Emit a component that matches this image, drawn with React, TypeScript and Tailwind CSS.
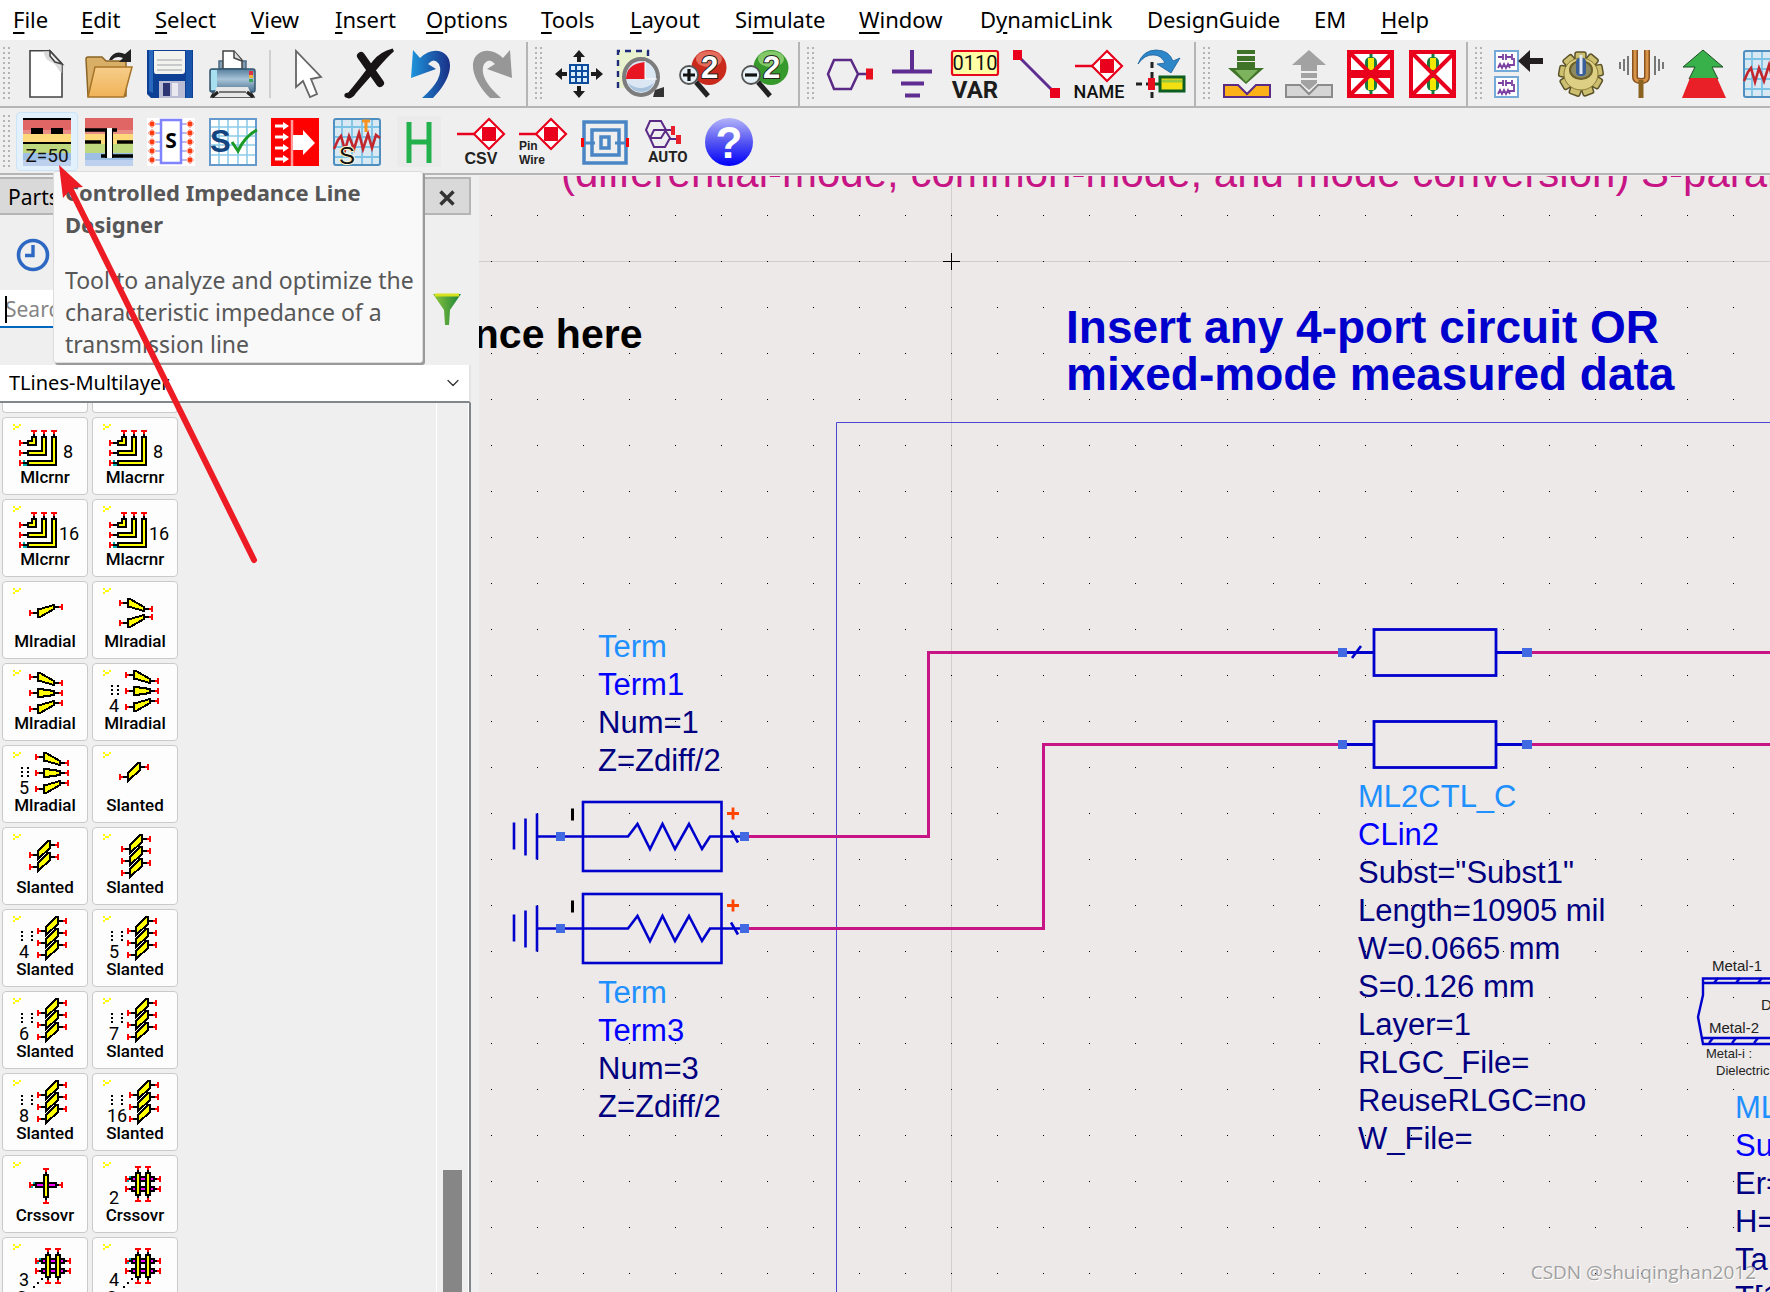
import React from 'react';
import { ChevronDown } from 'lucide-react';

// --- Menu bar ---
interface MenuEntry {
  label: string;
  hot: number;
  width: string;
}

const MENUS: MenuEntry[] = [
  { label: 'File', hot: 0, width: 'w-[68px]' },
  { label: 'Edit', hot: 0, width: 'w-[74px]' },
  { label: 'Select', hot: 0, width: 'w-24' },
  { label: 'View', hot: 0, width: 'w-[84px]' },
  { label: 'Insert', hot: 0, width: 'w-[91px]' },
  { label: 'Options', hot: 0, width: 'w-[115px]' },
  { label: 'Tools', hot: 0, width: 'w-[89px]' },
  { label: 'Layout', hot: 0, width: 'w-[105px]' },
  { label: 'Simulate', hot: 2, width: 'w-[124px]' },
  { label: 'Window', hot: 0, width: 'w-[121px]' },
  { label: 'DynamicLink', hot: 1, width: 'w-[167px]' },
  { label: 'DesignGuide', hot: -1, width: 'w-[167px]' },
  { label: 'EM', hot: -1, width: 'w-[67px]' },
  { label: 'Help', hot: 0, width: 'w-16' },
];

const MenuBar: React.FC = () => (
  <nav className="flex h-10 shrink-0 items-center bg-white pb-[3px] pl-[13px] text-[22px] leading-8 text-black">
    {MENUS.map((m) => (
      <button key={m.label} className={`shrink-0 whitespace-nowrap text-left ${m.width}`}>
        {m.hot < 0 ? (
          m.label
        ) : (
          <>
            {m.label.slice(0, m.hot)}
            <span className="underline decoration-2 underline-offset-4">{m.label[m.hot]}</span>
            {m.label.slice(m.hot + 1)}
          </>
        )}
      </button>
    ))}
  </nav>
);

// --- Toolbar icons, all on a 48 x 48 grid ---
const Icon: React.FC<{ children: React.ReactNode }> = ({ children }) => (
  <svg viewBox="0 0 48 48" className="h-12 w-12 overflow-visible" fontFamily="Liberation Sans, sans-serif">
    {children}
  </svg>
);

const NewIcon = () => (
  <Icon>
    <path d="M7 .8h20l12 13V47H7z" fill="#fff" stroke="#444" strokeWidth="1.6" />
    <path d="M20 1h7l12 13v9C34 20 34 14 28 12S22 5 20 1z" fill="#ccc" opacity=".7" />
    <path d="M27 1v5l5 6 7 2z" fill="#eee" stroke="#444" strokeWidth="1.6" />
  </Icon>
);

const OpenIcon = () => (
  <Icon>
    <path d="M1 9q0-2 2-2h14l4 4h20v35H3z" fill="#d9ae66" stroke="#8a6425" strokeWidth="1.5" />
    <path d="M10 17h37l-8 30H3z" fill="url(#folder)" stroke="#a87528" strokeWidth="1.5" />
    <path d="M24 10q5-11 16-6l6-5v13H34l4-4q-7-3-11 2z" fill="#222" />
    <defs>
      <linearGradient id="folder" x2="0" y2="1">
        <stop stopColor="#f6cd8a" />
        <stop offset="1" stopColor="#f0b358" />
      </linearGradient>
    </defs>
  </Icon>
);

const SaveIcon = () => (
  <Icon>
    <path d="M0 0h46v48H4l-4-4z" fill="#0d3f94" />
    <path d="M2 0h4v43l-4-2z" fill="#2768bd" />
    <path d="M39 0h6v48h-6z" fill="#1a55ac" />
    <path d="M7 1h31v20q0 3-3 3H9q-2 0-2-3z" fill="#f2f2ee" />
    <path d="M10 10h25M10 15h25M10 20h25" stroke="#b9bcc0" strokeWidth="1.5" />
    <path d="M12 31h26v17H12z" fill="#b9bcd3" />
    <path d="M16 33h7v13h-7z" fill="#2d3472" />
    <path d="M25 33h6v13h-6z" fill="#e9e9ef" />
  </Icon>
);

const PrinterIcon = () => (
  <Icon>
    <path d="M10 19V11h27v8z" fill="#7f9db3" stroke="#4e6c85" strokeWidth="1.5" />
    <path d="M14 19V1h11l8 9v9z" fill="#fff" stroke="#444" strokeWidth="1.5" />
    <path d="M25 1v7l8 3" fill="#ddd" stroke="#444" strokeWidth="1.5" />
    <path d="M8 36h30l7 11H2z" fill="#dcdcdc" stroke="#333" strokeWidth="1.5" />
    <rect x="1" y="19" width="45" height="23" rx="2" fill="url(#printer)" stroke="#33576f" strokeWidth="1.5" />
    <path d="M2 20h6v20H2z" fill="#a8dff0" />
    <path d="M8 37h31l4 10H4z" fill="#e7e7e7" />
    <path d="M10 42h27" stroke="#777" strokeWidth="2" />
    <path d="M3 47l6-5M44 47l-6-5" stroke="#222" strokeWidth="3" />
    <path d="M40 21h4v4h-4z" fill="#dd3344" />
    <path d="M40 25h4v3h-4z" fill="#efb43a" />
    <path d="M40 29h4v3h-4z" fill="#3aa655" />
    <defs>
      <linearGradient id="printer" x2="0" y2="1">
        <stop stopColor="#557e9e" />
        <stop offset=".45" stopColor="#a9c4d8" />
        <stop offset="1" stopColor="#47708f" />
      </linearGradient>
    </defs>
  </Icon>
);

const PointerIcon = () => (
  <Icon>
    <path d="M13 1v36l7-6 7 16 7-3-6-15 10-2z" fill="#fff" stroke="#666" strokeWidth="1.8" />
  </Icon>
);

const DeleteIcon = () => (
  <Icon>
    <path d="M16 6l19 27" stroke="#181416" strokeWidth="8" strokeLinecap="round" />
    <path d="M4 44Q16 30 29 12 36 3 48 0 40 7 31 18L10 42Q6 49 1 46 0 44 4 44z" fill="#181416" stroke="#181416" strokeWidth="3" />
  </Icon>
);

const UndoIcon = () => (
  <Icon>
    <path d="M4 28L6 0l7 8Q24-2 35 2c14 7 9 28-9 46H15Q38 28 32 14q-5-7-11 0l8 5z" fill="url(#undo)" />
    <defs>
      <linearGradient id="undo">
        <stop stopColor="#1e95dc" />
        <stop offset="1" stopColor="#1a2f86" />
      </linearGradient>
    </defs>
  </Icon>
);

const RedoIcon = () => (
  <Icon>
    <path d="M43 28L41 0l-7 8Q23-2 12 2c-14 7-9 28 9 46h11Q9 28 15 14q5-7 11 0l-8 5z" fill="#979797" />
  </Icon>
);

const ViewAllIcon = () => (
  <Icon>
    <rect x="14" y="14" width="20" height="20" fill="#0c4a9c" />
    <path
      d="M16 16h4v4h-4zM22 16h4v4h-4zM28 16h4v4h-4zM16 22h4v4h-4zM22 22h4v4h-4zM28 22h4v4h-4zM16 28h4v4h-4zM22 28h4v4h-4zM28 28h4v4h-4z"
      fill="#d8ecff"
    />
    <path
      d="M24 0l6 7h-4v5h-4V7h-4zM24 48l6-7h-4v-5h-4v5h-4zM0 24l7-6v4h5v4H7v4zM48 24l-7-6v4h-5v4h5v4z"
      fill="#1c1c1c"
    />
  </Icon>
);

const ZoomAreaIcon = () => (
  <Icon>
    <path d="M0 0h31v38H0z" fill="#e9f2cf" />
    <path d="M1 38V1h30v12" fill="none" stroke="#1d2b7a" strokeWidth="2.400" strokeDasharray="6 5" />
    <path d="M38 40l9-3v10H36z" fill="#333" />
    <ellipse cx="24" cy="27" rx="17" ry="18" fill="#dbe7f3" stroke="#7c7c7c" strokeWidth="4" />
    <path d="M28 12v17H9q0-15 19-17z" fill="#e81622" />
    <path d="M28 11v18h12" fill="none" stroke="#fff" strokeWidth="1" />
    <path d="M11 33q12 10 26 0-4 9-13 9t-13-9z" fill="#a9c3dd" />
  </Icon>
);

const ZoomTwo: React.FC<{ color: string; light: string; minus?: boolean }> = ({ color, light, minus }) => (
  <Icon>
    <circle cx="30" cy="17.5" r="17.5" fill={color} />
    <ellipse cx="30" cy="9" rx="13" ry="8" fill={light} opacity=".7" />
    <text x="22" y="28" fontSize="31" fontWeight="bold" fill="#fff" stroke="#222" strokeWidth="2" paintOrder="stroke">
      2
    </text>
    <path d="M17 32l12 14" stroke="#222" strokeWidth="5" />
    <circle cx="10" cy="25" r="9" fill="#e6f1f8" stroke="#555" strokeWidth="1.8" />
    <path d={minus ? 'M4 25h12' : 'M4 25h12M10 19v12'} stroke="#111" strokeWidth="3.200" />
  </Icon>
);

const PortIcon = () => (
  <Icon>
    <path d="M7 10h17l7 14-7 15H7L1 24zM31 24h8" fill="none" stroke="#5a2a86" strokeWidth="2.500" />
    <rect x="39" y="18.5" width="7" height="11" fill="#e8101f" />
  </Icon>
);

const GroundIcon = () => (
  <Icon>
    <path d="M23 0v22M3 21.500h40M12 33.500h23M16 45.500h15" stroke="#5f2c91" strokeWidth="4" />
  </Icon>
);

const VarIcon = () => (
  <Icon>
    <rect x="1" y="1" width="46" height="24" rx="2" fill="#ffffa6" stroke="#e60a1a" strokeWidth="2.200" />
    <text x="24" y="20" textAnchor="middle" fontSize="20" fontFamily="Roboto, sans-serif" fill="#111">0110</text>
    <text x="24" y="48" textAnchor="middle" fontSize="24" fontWeight="bold" fontFamily="Roboto, sans-serif" fill="#1c1c1c">VAR</text>
  </Icon>
);

const WireIcon = () => (
  <Icon>
    <path d="M4 5l38 38" stroke="#5f2c91" strokeWidth="3" />
    <path d="M0 0h9v10H0zM37 38h10v10H37z" fill="#e8001c" />
  </Icon>
);

const Diamond: React.FC<{ cx: number; y: number }> = ({ cx, y }) => (
  <g>
    <path d={`M0 ${y}h${cx - 15}`} stroke="#e8001c" strokeWidth="2.500" />
    <path
      d={`M${cx} ${y - 15}l15 15-15 15-15-15z`}
      fill="#fff"
      stroke="#e8001c"
      strokeWidth="2.200"
    />
    <rect x={cx - 7} y={y - 7} width="14" height="14" rx="1" fill="#e8001c" />
  </g>
);

const NameIcon = () => (
  <Icon>
    <Diamond cx={32} y={16} />
    <text x="24" y="48" textAnchor="middle" fontSize="18" fontWeight="500" fontFamily="Roboto, sans-serif" fill="#111">NAME</text>
  </Icon>
);

const SwapIcon = () => (
  <Icon>
    <path d="M15 12v36M-1 34h12" stroke="#222" strokeWidth="3" strokeDasharray="6 4" />
    <path d="M17 34h6" stroke="#0b5d22" strokeWidth="3" />
    <rect x="11" y="28" width="7" height="12" fill="#e8101f" />
    <rect x="23" y="27" width="24" height="14" fill="#f3e012" stroke="#0b5d22" strokeWidth="3" />
    <path d="M25 31h20" stroke="#9bc93d" strokeWidth="3" />
    <path d="M1 14Q6 0 19 0q13 0 17 11l7-3-9 15-14-9 8-1Q24 5 17 5 8 4 1 14z" fill="#2c86c8" stroke="#1b5f99" strokeWidth=".8" />
  </Icon>
);

const PushIcon = () => (
  <Icon>
    <path d="M1 35h14l9 9 9-9h14v12H1z" fill="#fbb117" stroke="#5c2b85" strokeWidth="2" />
    <path d="M14 0h18v4H14zM14 6h18v5H14zM14 12h18v6h9L23 34 5 18h9z" fill="#3f7327" />
    <path d="M12 20h23L23 32z" fill="#7eb35e" />
  </Icon>
);

const PopIcon = () => (
  <Icon>
    <path d="M1 35h14l9 9 9-9h14v12H1z" fill="#d5d5d5" stroke="#8b8b8b" strokeWidth="2" />
    <path d="M24 0l17 15h-9v6H16v-6H7zM16 23h16v5H16zM16 30h16v3l-8 7-8-7z" fill="#a2a2a2" />
  </Icon>
);

const DeactivateIcon: React.FC<{ short?: boolean }> = ({ short }) => (
  <Icon>
    <rect x="2" y="2" width="43" height="44" fill="#fff" stroke="#e8001c" strokeWidth="4" />
    <path d="M24 4v40" stroke="#157a3c" strokeWidth="3" />
    <rect x="18" y="7" width="12" height="13" rx="5" fill="#157a3c" />
    <rect x="18" y="28" width="12" height="13" rx="5" fill="#157a3c" />
    <path d="M21 8h6v12h-6zM21 28h6v12h-6z" fill="#f2e800" />
    <path d="M4 4l40 40M44 4L4 44" stroke="#e8001c" strokeWidth="4" />
    {short && <path d="M2 24h43" stroke="#e8001c" strokeWidth="8" />}
  </Icon>
);

const SchematicsIcon = () => (
  <Icon>
    <path d="M0 1h23v20H0zM0 27h23v20H0z" fill="#fff" stroke="#74a9d8" strokeWidth="2" />
    {[0, 26].map((dy) => (
      <g key={dy} fill="none" stroke="#7a3fa0" strokeWidth="1.800" transform={`translate(0 ${dy})`}>
        <path d="M3 7h5M8 4v6M11 4v6M11 7h5M17 4v6M19 8v7h-5M3 18l2-4 2 4 2-4 2 4 2-4 2 4" />
      </g>
    ))}
    <path d="M48 8v6H35v8L23 11 35 0v8z" fill="#231f20" />
  </Icon>
);

const GearIcon = () => (
  <Icon>
    {[0, 40, 80, 120, 160, 200, 240, 280, 320].map((a) => (
      <rect key={a} x="18" y="2" width="11" height="12" rx="2" fill="#cdbf70" stroke="#5c5228" strokeWidth="1.500" transform={`rotate(${a} 24 24)`} />
    ))}
    <ellipse cx="24" cy="24" rx="17" ry="16" fill="#ddd085" stroke="#8a7a35" strokeWidth="1" />
    <ellipse cx="24" cy="20" rx="11" ry="9" fill="#8d8a60" stroke="#6c5f28" strokeWidth="2" />
    <rect x="19" y="8" width="10" height="18" rx="4" fill="#3a5e9a" />
    <path d="M24 5v19" stroke="#dfe8f2" strokeWidth="3" />
  </Icon>
);

const TuneIcon = () => (
  <Icon>
    <path d="M16 0v27q0 4 6 4t6-4V0" fill="none" stroke="#8a5220" strokeWidth="6" />
    <path d="M16 0v27q0 4 6 4t6-4V0" fill="none" stroke="#d79348" strokeWidth="3" />
    <path d="M22 30v18" stroke="#8a6320" strokeWidth="5" />
    <path d="M9 6v19M5 9v12M1 12v7M36 6v19M40 9v12M44 12v7" stroke="#777" strokeWidth="2" />
  </Icon>
);

const OptimIcon = () => (
  <Icon>
    <path d="M22 0L42 17H31l6 12H8l6-12H2z" fill="#39b14a" stroke="#1c4f25" strokeWidth="1" />
    <path d="M9 28h27l9 20H1z" fill="#e92027" />
  </Icon>
);

const Plot: React.FC = () => (
  <g>
    <rect x="1" y="1" width="46" height="46" rx="2" fill="#d9e9f4" stroke="#4f8fc0" strokeWidth="2" />
    <path d="M9 2v44M19 2v44M29 2v44M39 2v44M2 9h44M2 19h44M2 29h44M2 39h44" stroke="#7cc3e6" strokeWidth="1.800" />
    <path d="M1 31l4-9 3-4 4 14 4-14 5 13 5-16 4 16 5-15 4 14 4-13 4 3" fill="none" stroke="#c1272d" strokeWidth="2.600" />
  </g>
);

const PlotIcon = () => (
  <Icon>
    <Plot />
  </Icon>
);

const SPlotIcon = () => (
  <Icon>
    <Plot />
    <path d="M29 3h8M33 3v11" stroke="#f7941d" strokeWidth="3" />
    <text x="6" y="46" fontSize="24" fill="#111" stroke="#fff3c4" strokeWidth="2" paintOrder="stroke">S</text>
  </Icon>
);

const Layers = () => (
  <g>
    <path d="M0 0h48v16H0z" fill="#e06666" />
    <path d="M0 12h48v6H0z" fill="#e98f86" />
    <path d="M0 16h48v10H0z" fill="#ffd97a" />
    <path d="M0 26h48v9H0z" fill="#bfd77d" />
    <path d="M0 35h48v13H0z" fill="#9dbfe6" />
    <path d="M0 42h48v6H0z" fill="#bdd1ee" />
  </g>
);

const ImpedanceIcon = () => (
  <Icon>
    <Layers />
    <path d="M0 1h48M0 25h48" stroke="#000" strokeWidth="2" />
    <path d="M8 10h12v6H8zM28 10h12v6H28z" />
    <text x="24" y="44" textAnchor="middle" fontSize="19" fontFamily="Roboto, sans-serif" fill="#111">Z=50</text>
  </Icon>
);

const ViaIcon = () => (
  <Icon>
    <Layers />
    <path d="M0 12h32M0 24h16M32 24h16M16 38h32" stroke="#000" strokeWidth="3.500" />
    <path d="M20 11h8v29h-8z" fill="#000" />
    <path d="M22 10h5v30h-5z" fill="#fff" />
  </Icon>
);

const SBlockIcon = () => (
  <Icon>
    <path d="M0 0h48v48H0z" fill="#fff" />
    {[6, 15, 24, 33, 42].map((y) => (
      <g key={y}>
        <path d={`M5 ${y}h38`} stroke="#6f73e0" strokeWidth="1.200" />
        <path d={`M5 ${y - 4}l4 4-4 4-4-4zM43 ${y - 4}l4 4-4 4-4-4z`} fill="#ffd8d0" stroke="#ffb0a4" />
        <circle cx="5" cy={y} r="2.4" fill="#ff3b10" />
        <circle cx="43" cy={y} r="2.4" fill="#ff3b10" />
      </g>
    ))}
    <rect x="14" y="2" width="20" height="43" fill="#fff" stroke="#7f83ff" strokeWidth="2.500" />
    <text x="24" y="30" textAnchor="middle" fontSize="21" fontWeight="bold" fontFamily="Noto Sans, sans-serif" fill="#000">S</text>
  </Icon>
);

const SCheckIcon = () => (
  <Icon>
    <rect x="1" y="1" width="46" height="46" fill="#fff" stroke="#6699cc" strokeWidth="2" />
    <path d="M10 2v44M19 2v44M29 2v44M38 2v44M2 9h44M2 18h44M2 27h44M2 37h44" stroke="#8ccbe8" strokeWidth="1.600" />
    <text x="1" y="34" fontSize="31" fontWeight="bold" fill="#12447f">S</text>
    <path d="M23 24l6 9Q36 18 48 12" fill="none" stroke="#1a9a26" strokeWidth="3" />
  </Icon>
);

const DriveIcon = () => (
  <Icon>
    <path d="M0 0h48v48H0z" fill="#f00" />
    <path d="M21 2v46" stroke="#ff9c9c" strokeWidth="2.500" />
    <path d="M22 17h10v-5l12 13-12 12v-5H22z" fill="#fff" />
    {[8, 19, 30, 41].map((y) => (
      <path key={y} d={`M4 ${y}h10`} stroke="#fff" strokeWidth="3" />
    ))}
    {[8, 19, 30, 41].map((y) => (
      <path key={`t${y}`} d={`M12 ${y - 4}l6 4-6 4z`} fill="#fff" />
    ))}
  </Icon>
);

const HIcon = () => (
  <Icon>
    <path d="M2-2h44v51H2z" fill="#ebebeb" />
    <path d="M14 4v41M34 4v41M14 24h20" stroke="#22b14c" strokeWidth="5" />
  </Icon>
);

const CsvIcon = () => (
  <Icon>
    <Diamond cx={32} y={16} />
    <text x="24" y="46" textAnchor="middle" fontSize="16" fontWeight="bold" fill="#222">CSV</text>
  </Icon>
);

const PinWireIcon = () => (
  <Icon>
    <Diamond cx={32} y={16} />
    <text x="0" y="32" fontSize="12" fontWeight="bold" fill="#222">Pin</text>
    <text x="0" y="46" fontSize="12" fontWeight="bold" fill="#222">Wire</text>
  </Icon>
);

const SpiralIcon = () => (
  <Icon>
    <path d="M3 4h42v41H3zM11 12h27v25H11zM20 19h8v11h-8z" fill="none" stroke="#4a86c5" strokeWidth="3.500" />
    <path d="M4 25h10M34 25h10" stroke="#4a86c5" strokeWidth="3" />
    <path d="M0 20h3v9H0zM45 20h3v9h-3z" fill="#f00" />
  </Icon>
);

const AutoIcon = () => (
  <Icon>
    <path d="M7 3h11l5 9-5 8H7L3 12zM11 12h11l5 8-5 9H11l-4-9zM23 12h5M27 21h6" fill="none" stroke="#5a2a86" strokeWidth="2" />
    <path d="M28 8h4v9h-4zM33 17h5v9h-5z" fill="#e8202c" />
    <text x="25" y="44" textAnchor="middle" fontSize="15" fontWeight="bold" fontFamily="Roboto, sans-serif" fill="#222">AUTO</text>
  </Icon>
);

const HelpIcon = () => (
  <Icon>
    <circle cx="24" cy="24" r="24" fill="url(#help)" />
    <text x="24" y="40" textAnchor="middle" fontSize="44" fontWeight="bold" fill="#fff">?</text>
    <defs>
      <linearGradient id="help" x2="0" y2="1">
        <stop stopColor="#b4b4fa" />
        <stop offset=".5" stopColor="#5555f2" />
        <stop offset="1" stopColor="#0000fa" />
      </linearGradient>
    </defs>
  </Icon>
);

// --- Toolbars ---
const Grip: React.FC<{ className?: string }> = ({ className = '' }) => (
  <span
    className={`h-[54px] w-[7px] shrink-0 bg-[radial-gradient(circle_at_1px_1px,#b4b4b4_1px,transparent_1px)] bg-[length:5px_5px] ${className}`}
  />
);

interface ToolProps {
  name: string;
  active?: boolean;
  children: React.ReactNode;
}

const Tool: React.FC<ToolProps> = ({ name, active, children }) => (
  <button
    aria-label={name}
    className={`flex h-[59px] w-[62px] shrink-0 items-center justify-center rounded-sm border ${
      active ? 'border-[#cce4f7] bg-[#e3f1fc]' : 'border-transparent'
    }`}
  >
    {children}
  </button>
);

const ToolGroup: React.FC<{ first?: boolean; children: React.ReactNode }> = ({ first, children }) => (
  <div
    className={`flex shrink-0 items-center border-r-2 border-[#b5b5b5] pr-[2px] ${first ? 'pl-[3px]' : 'pl-[7px]'}`}
  >
    <Grip className="mr-1.5" />
    {children}
  </div>
);

const MainToolbar: React.FC = () => (
  <div className="flex h-[68px] shrink-0 overflow-hidden border-b-2 border-[#b5b5b5] bg-[#efefef] pt-0.5">
    <ToolGroup first>
      <Tool name="New"><NewIcon /></Tool>
      <Tool name="Open"><OpenIcon /></Tool>
      <Tool name="Save"><SaveIcon /></Tool>
      <Tool name="Print"><PrinterIcon /></Tool>
      <span className="mx-[5px] h-12 w-0.5 shrink-0 bg-[#d0d0d0]" />
      <Tool name="Select"><PointerIcon /></Tool>
      <Tool name="Delete"><DeleteIcon /></Tool>
      <Tool name="Undo"><UndoIcon /></Tool>
      <Tool name="Redo"><RedoIcon /></Tool>
    </ToolGroup>
    <ToolGroup>
      <Tool name="View all"><ViewAllIcon /></Tool>
      <Tool name="Zoom area"><ZoomAreaIcon /></Tool>
      <Tool name="Zoom in"><ZoomTwo color="#c92a1c" light="#f08a78" /></Tool>
      <Tool name="Zoom out"><ZoomTwo color="#359a2b" light="#a5dc84" minus /></Tool>
    </ToolGroup>
    <ToolGroup>
      <Tool name="Port"><PortIcon /></Tool>
      <Tool name="Ground"><GroundIcon /></Tool>
      <Tool name="Variable"><VarIcon /></Tool>
      <Tool name="Wire"><WireIcon /></Tool>
      <Tool name="Wire name"><NameIcon /></Tool>
      <Tool name="Swap"><SwapIcon /></Tool>
    </ToolGroup>
    <ToolGroup>
      <Tool name="Push into"><PushIcon /></Tool>
      <Tool name="Pop out"><PopIcon /></Tool>
      <Tool name="Deactivate and short"><DeactivateIcon short /></Tool>
      <Tool name="Deactivate"><DeactivateIcon /></Tool>
    </ToolGroup>
    <ToolGroup>
      <Tool name="Controller"><SchematicsIcon /></Tool>
      <Tool name="Run"><GearIcon /></Tool>
      <Tool name="Tune"><TuneIcon /></Tool>
      <Tool name="Optimize"><OptimIcon /></Tool>
      <Tool name="Plot"><PlotIcon /></Tool>
    </ToolGroup>
  </div>
);

const SecondToolbar: React.FC = () => (
  <div className="flex h-[67px] shrink-0 items-center overflow-hidden border-b-2 border-[#b5b5b5] bg-[#efefef] pl-[3px] pt-0.5">
    <Grip className="mr-1.5" />
    <Tool name="Controlled Impedance Line Designer" active><ImpedanceIcon /></Tool>
    <Tool name="Via Designer"><ViaIcon /></Tool>
    <Tool name="S block"><SBlockIcon /></Tool>
    <Tool name="S check"><SCheckIcon /></Tool>
    <Tool name="Drive"><DriveIcon /></Tool>
    <Tool name="S plot"><SPlotIcon /></Tool>
    <Tool name="H"><HIcon /></Tool>
    <Tool name="CSV"><CsvIcon /></Tool>
    <Tool name="Pin wire"><PinWireIcon /></Tool>
    <Tool name="Spiral"><SpiralIcon /></Tool>
    <Tool name="Auto"><AutoIcon /></Tool>
    <Tool name="Help"><HelpIcon /></Tool>
  </div>
);

// --- Part glyphs: low resolution bitmaps, one unit is two pixels ---
const Port: React.FC<{ x: number; y: number; turn?: number }> = ({ x, y, turn = 0 }) => (
  <g transform={`rotate(${turn} ${x + 0.5} ${y + 0.5})`}>
    <path d={`M${x} ${y - 1}h1v3h-1zM${x + 1} ${y}h1v1h-1z`} fill="#f00" />
    <path d={`M${x + 2} ${y}h2v1h-2z`} fill="#000" />
  </g>
);

const Corner: React.FC = () => (
  <g>
    {[0, 1, 2].map((i) => {
      const d = `M13.5 ${12.5 + 5 * i}H${15.5 + 5 * i}V10.5`;
      return (
        <g key={i} fill="none">
          <Port x={8} y={12 + 5 * i} />
          <Port x={15 + 5 * i} y={6} turn={90} />
          <path d={d} stroke="#000" strokeWidth="3" strokeLinecap="square" />
          <path d={d} stroke="#ff0" strokeWidth="1" strokeLinecap="square" />
        </g>
      );
    })}
    <path d="M10 21h1v1h-1zM10 23h2v1h-2z" fill="#0aa" />
  </g>
);

const Radial: React.FC<{ x: number; y: number; dy: number }> = ({ x, y, dy }) => (
  <g>
    <Port x={x} y={y} />
    <Port x={x + 16} y={y + dy} turn={180} />
    <path
      d={`M${x + 4.5} ${y - 1.5}H${x + 5.5}L${x + 12.5} ${y + dy - 0.5}V${y + dy + 1.5}L${x + 5.5} ${y + 2.5}H${x + 4.5}z`}
      fill="#ff0"
      stroke="#000"
    />
  </g>
);

const Slant: React.FC<{ x: number; y: number }> = ({ x, y }) => (
  <g>
    <Port x={x} y={y} />
    <Port x={x + 14} y={y - 5} turn={180} />
    <path d={`M${x + 4.5} ${y - 1.5}L${x + 9.5} ${y - 6.5}H${x + 10.5}V${y - 3}L${x + 4.5} ${y + 2.5}z`} fill="#ff0" stroke="#000" />
  </g>
);

const CrossOne: React.FC = () => (
  <g>
    <Port x={13} y={14} />
    <Port x={29} y={14} turn={180} />
    <Port x={21} y={6} turn={90} />
    <Port x={21} y={23} turn={270} />
    <path d="M16.500 13.500h10v2h-10z" fill="#f0f" stroke="#000" />
    <path d="M20.500 9.500h2v11h-2z" fill="#ff0" stroke="#000" />
    <path d="M15 13h1v1h-1zM14 15h1v1h-1z" fill="#0aa" />
  </g>
);

const CrossTwo: React.FC = () => (
  <g>
    {[11, 16].map((y) => (
      <g key={y}>
        <Port x={16} y={y} />
        <Port x={33} y={y} turn={180} />
        <path d={`M19.500 ${y - 0.5}h11v2h-11z`} fill="#f0f" stroke="#000" />
      </g>
    ))}
    {[22, 27].map((x) => (
      <g key={x}>
        <Port x={x} y={5} turn={90} />
        <Port x={x} y={22} turn={270} />
        <path d={`M${x - 0.5} 8.500h2v11h-2z`} fill="#ff0" stroke="#000" />
      </g>
    ))}
    <path d="M18 10h1v1h-1zM17 12h1v1h-1z" fill="#0aa" />
  </g>
);

type Shape = 'corner' | 'radial' | 'slant' | 'cross' | 'cross2';

interface Part {
  label: string;
  shape: Shape;
  count?: number;
  num?: string;
}

const PARTS: Part[] = [
  { label: 'Mlcrnr', shape: 'corner', num: '8' },
  { label: 'Mlacrnr', shape: 'corner', num: '8' },
  { label: 'Mlcrnr', shape: 'corner', num: '16' },
  { label: 'Mlacrnr', shape: 'corner', num: '16' },
  { label: 'Mlradial', shape: 'radial', count: 1 },
  { label: 'Mlradial', shape: 'radial', count: 2 },
  { label: 'Mlradial', shape: 'radial', count: 3 },
  { label: 'Mlradial', shape: 'radial', count: 3, num: '4' },
  { label: 'Mlradial', shape: 'radial', count: 3, num: '5' },
  { label: 'Slanted', shape: 'slant', count: 1 },
  { label: 'Slanted', shape: 'slant', count: 2 },
  { label: 'Slanted', shape: 'slant', count: 3 },
  { label: 'Slanted', shape: 'slant', count: 3, num: '4' },
  { label: 'Slanted', shape: 'slant', count: 3, num: '5' },
  { label: 'Slanted', shape: 'slant', count: 3, num: '6' },
  { label: 'Slanted', shape: 'slant', count: 3, num: '7' },
  { label: 'Slanted', shape: 'slant', count: 3, num: '8' },
  { label: 'Slanted', shape: 'slant', count: 3, num: '16' },
  { label: 'Crssovr', shape: 'cross' },
  { label: 'Crssovr', shape: 'cross2', num: '2' },
  { label: 'Crssovr', shape: 'cross2', num: '3' },
  { label: 'Crssovr', shape: 'cross2', num: '4' },
];

const radials = (count: number, num?: string) => {
  if (count === 1) return [[13, 15, -3]];
  if (count === 2) return [[13, 10, 3], [13, 20, -3]];
  return num ? [[16, 5, 3], [16, 13, 0], [16, 21, -3]] : [[13, 6, 3], [13, 14, 0], [13, 22, -3]];
};

const slants = (count: number, num?: string) => {
  if (count === 1) return [[13, 15]];
  if (count === 2) return [[13, 13], [13, 19]];
  const x = num === '16' ? 18 : num ? 17 : 14;
  return [[x, 10], [x, 16], [x, 22]];
};

const PartGlyph: React.FC<{ part: Part }> = ({ part }) => {
  const { shape, count = 1, num } = part;
  const dotted = num && (shape === 'radial' || shape === 'slant');
  const right = shape === 'radial' ? 12 : 14;
  return (
    <svg viewBox="0 0 42 26" className="h-[52px] w-[84px] shrink-0" shapeRendering="crispEdges">
      <path d="M5 3h1v1h-1zM7 4h1v1h-1zM6 4h1v1h-1zM8 3h1v1h-1zM5 5h1v1h-1z" fill="#ff0" />
      {shape === 'corner' && <Corner />}
      {shape === 'radial' && radials(count, num).map(([x, y, dy]) => <Radial key={y} x={x} y={y} dy={dy} />)}
      {shape === 'slant' && slants(count, num).map(([x, y]) => <Slant key={y} x={x} y={y} />)}
      {shape === 'cross' && <CrossOne />}
      {shape === 'cross2' && <CrossTwo />}
      {dotted && (
        <path d={`M9.500 10.500v6M${right + 0.5} 10.500v6`} stroke="#000" strokeWidth="1" strokeDasharray="1 1" />
      )}
      {(num === '3' || num === '4') && shape === 'cross2' && (
        <path d="M15 24h1v1h-1zM17 22h1v1h-1zM19 20h1v1h-1z" fill="#000" />
      )}
      {num && (
        <text x={shape === 'corner' ? (num === '16' ? 28 : 30) : num === '16' ? 7 : 8} y={shape === 'corner' ? 20 : 24} fontSize="9" fontFamily="Roboto, sans-serif">
          {num}
        </text>
      )}
    </svg>
  );
};

// --- Parts dock ---
const PartsDock: React.FC = () => (
  <aside className="mt-0.5 flex w-[471px] shrink-0 flex-col bg-[#efefef] text-[21px] text-black">
    <div className="flex h-[38px] shrink-0 items-center justify-between border-2 border-l-0 border-[#b5b5b5] bg-[#d9d9d9] pl-2 pt-1">
      <h2>Parts</h2>
      <button aria-label="Close" className="flex h-full w-11 items-center justify-center">
        <svg viewBox="0 0 16 16" className="h-4 w-4">
          <path d="M1.500 1.500l13 13M14.500 1.500l-13 13" stroke="#333" strokeWidth="3.400" />
        </svg>
      </button>
    </div>
    <div className="flex h-[75px] shrink-0 items-center pl-4 pt-1">
      <button aria-label="Recent parts">
        <svg viewBox="0 0 34 34" className="h-[34px] w-[34px]">
          <circle cx="17" cy="17" r="14.5" fill="none" stroke="#2d69c2" strokeWidth="3.600" />
          <path d="M17 7v10.500H9" fill="none" stroke="#2d69c2" strokeWidth="3.400" />
        </svg>
      </button>
    </div>
    <div className="flex h-[38px] shrink-0 items-center">
      <div className="relative h-full w-[420px] border-b-2 border-[#0067c0] bg-white">
        <input aria-label="Search parts" placeholder="Search" className="h-full w-full bg-transparent pl-[5px] pt-0.5 outline-none placeholder:text-[#858585]" />
        <span className="absolute left-[5px] top-[6px] h-[27px] w-0.5 bg-black" />
      </div>
      <button aria-label="Filter" className="ml-[13px]">
        <svg viewBox="0 0 28 32" className="h-8 w-7">
          <path d="M0 1h28L17 17l-1 15h-4l-1-15z" fill="url(#funnel)" />
          <path d="M2 2h24" stroke="#d7e21f" strokeWidth="3" />
          <defs>
            <linearGradient id="funnel">
              <stop stopColor="#8cc63f" />
              <stop offset="1" stopColor="#1c8238" />
            </linearGradient>
          </defs>
        </svg>
      </button>
    </div>
    <div className="relative mt-[37px] shrink-0">
      <select aria-label="Palette" className="h-[38px] w-full appearance-none border-b-2 border-r-2 border-b-[#7f868c] border-r-[#e4e4e4] bg-white pl-[9px] text-[20px] outline-none">
        <option>TLines-Multilayer</option>
      </select>
      <ChevronDown className="pointer-events-none absolute right-2 top-2 h-5 w-5 text-[#333]" strokeWidth={1.5} />
    </div>
    <div className="flex min-h-0 flex-1 overflow-hidden border-r-2 border-[#7f868c]">
      <div className="flex-1 pl-0.5">
        <div className="grid w-44 grid-cols-[86px_86px] gap-1">
          {/* lower edge of the row that is scrolled out */}
          <div className="h-[10px] rounded-b border border-t-0 border-[#cacaca] bg-[#fdfdfd]" />
          <div className="h-[10px] rounded-b border border-t-0 border-[#cacaca] bg-[#fdfdfd]" />
          {PARTS.map((p, i) => (
            <button key={i} className="flex h-[78px] flex-col items-center rounded border border-[#cacaca] bg-[#fdfdfd]">
              <PartGlyph part={p} />
              <span className="-mt-[3px] font-[Roboto,sans-serif] text-[17px] font-medium leading-5">{p.label}</span>
            </button>
          ))}
        </div>
      </div>
      <div className="flex w-[33px] items-end border-l border-r border-white pl-[6px]">
        <div className="h-[122px] w-[19px] bg-[#868686]" />
      </div>
    </div>
  </aside>
);

// --- Schematic ---
const TermSymbol: React.FC<{ y: number }> = ({ y }) => (
  <g transform={`translate(0 ${y})`}>
    <g fill="none" stroke="#0000cd" strokeWidth="2.600">
      <path d="M514-14v27M525.500-18v37M537-23v46M537 0h91l9.500-12.500L650 12.500l12.500-25L675 12.500l14-25 13 25L710 0h34M731-6l7 12" />
      <rect x="583" y="-34.5" width="138.5" height="69" />
    </g>
    <path d="M572.500-28v12" stroke="#000" strokeWidth="3" />
    <path d="M727-23h12M733-29v12" stroke="#ff4500" strokeWidth="2.800" />
    <path d="M556-4.500h9v9h-9zM740-4.500h9v9h-9z" fill="#4169e1" />
  </g>
);

const LineSymbol: React.FC<{ y: number }> = ({ y }) => (
  <g>
    <path d={`M1342 ${y}h32M1496 ${y}h30`} stroke="#0000cd" strokeWidth="3" />
    <rect x="1374" y={y - 23} width="122" height="46" fill="none" stroke="#0000cd" strokeWidth="2.800" />
    <path d={`M1338 ${y - 4.5}h9v9h-9zM1522 ${y - 4.5}h10v9h-10z`} fill="#4169e1" />
  </g>
);

interface LabelProps {
  place: string;
  lines: string[];
}

// Component name, instance name, then the parameters
const Label: React.FC<LabelProps> = ({ place, lines }) => (
  <div className={`absolute whitespace-pre text-[31px] leading-[38px] text-[#000080] ${place}`}>
    {lines.map((line, i) => (
      <p key={i} className={i === 0 ? 'text-[#1e90ff]' : i === 1 ? 'text-[#0000ff]' : ''}>
        {line}
      </p>
    ))}
  </div>
);

const Schematic: React.FC = () => (
  <main className="relative ml-2 mt-px min-w-0 flex-1 overflow-hidden bg-[#ede9e8] font-['Liberation_Sans',sans-serif]">
    <svg viewBox="479 176 1291 1116" className="absolute left-0 top-0 h-[1116px] w-[1291px]">
      <defs>
        <pattern id="dots" x="491" y="261" width="46" height="46" patternUnits="userSpaceOnUse">
          <rect width="1" height="1" fill="#000" />
        </pattern>
      </defs>
      <path d="M951.500 176v1116M479 261.500h1291" stroke="#d2cece" />
      <rect x="479" y="176" width="1291" height="1116" fill="url(#dots)" />
      <path d="M943 261.500h17M951.500 253v17" stroke="#000" />
      <path d="M836.500 1292V422.500H1770" fill="none" stroke="#4a48d2" />
      <path
        d="M744 836.500h184.500V652.500H1342M744 928.500h299.500V744.500H1342M1527 652.500h243M1527 744.500h243"
        fill="none"
        stroke="#c71585"
        strokeWidth="3"
      />
      <TermSymbol y={836.5} />
      <TermSymbol y={928.5} />
      <LineSymbol y={652.5} />
      <LineSymbol y={744.5} />
      <path d="M1352 658l9-12" stroke="#0000cd" strokeWidth="2.600" />
      <g fill="none" stroke="#0000cd" strokeWidth="2.400">
        <path d="M1770 978.500h-67V995l-5 22 5 27h67M1703 983h67M1703 1038h67" />
        <path d="M1714 983l4-5M1736 983l4-5M1758 983l4-5M1709 1043l4-5M1732 1043l4-5M1754 1043l4-5" />
      </g>
    </svg>
    <p className="absolute -top-7 left-[82px] whitespace-nowrap text-[42px] leading-[50px] text-[#c71585]">
      (differential-mode, common-mode, and mode conversion) S-parameters
    </p>
    <p className="absolute -left-7 top-[134px] whitespace-nowrap text-[41px] font-bold leading-[48px] text-black">ence here</p>
    <p className="absolute left-[587px] top-[128px] whitespace-nowrap text-[46px] font-bold leading-[47px] text-[#0000cd]">
      Insert any 4-port circuit OR
      <br />
      mixed-mode measured data
    </p>
    <Label place="left-[119px] top-[452px]" lines={['Term', 'Term1', 'Num=1', 'Z=Zdiff/2']} />
    <Label place="left-[119px] top-[798px]" lines={['Term', 'Term3', 'Num=3', 'Z=Zdiff/2']} />
    <Label
      place="left-[879px] top-[602px]"
      lines={[
        'ML2CTL_C',
        'CLin2',
        'Subst="Subst1"',
        'Length=10905 mil',
        'W=0.0665 mm',
        'S=0.126 mm',
        'Layer=1',
        'RLGC_File=',
        'ReuseRLGC=no',
        'W_File=',
      ]}
    />
    <Label place="left-[1256px] top-[913px]" lines={['ML', 'Su', 'Er=', 'H=', 'Ta', 'T[1']} />
    <div className="text-[15px] leading-4 text-[#222]">
      <p className="absolute left-[1233px] top-[782px]">Metal-1</p>
      <p className="absolute left-[1282px] top-[821px]">D</p>
      <p className="absolute left-[1230px] top-[844px]">Metal-2</p>
    </div>
    <div className="whitespace-nowrap text-[13px] leading-4 text-[#222]">
      <p className="absolute left-[1227px] top-[870px]">Metal-i :</p>
      <p className="absolute left-[1237px] top-[887px]">Dielectric-</p>
    </div>
    <p className="absolute bottom-2 right-3.5 whitespace-nowrap font-['Open_Sans',sans-serif] text-[19px] leading-6 text-[#a0a0a0] [text-shadow:1px_1px_0_#fff]">
      CSDN @shuiqinghan2012
    </p>
  </main>
);

// --- Overlays ---
const Tooltip: React.FC = () => (
  <div
    role="tooltip"
    className="absolute left-[53px] top-[171px] w-[370px] whitespace-nowrap rounded-[3px] border border-[#dcdcdc] bg-[#f9f9f9] pb-0.5 pl-[11px] pt-1 text-[22px] leading-8 text-[#575757] shadow-[2px_2px_0_#9a9a9a]"
  >
    <p className="font-bold">
      Controlled Impedance Line
      <br />
      Designer
    </p>
    <p className="mt-6 text-[23px]">
      Tool to analyze and optimize the
      <br />
      characteristic impedance of a
      <br />
      transmission line
    </p>
  </div>
);

const Arrow: React.FC = () => (
  <svg viewBox="0 0 210 410" className="pointer-events-none absolute left-[50px] top-[160px] h-[410px] w-[210px]">
    <path d="M204 400L20 28" stroke="#ed1c24" strokeWidth="6" strokeLinecap="round" />
    <path d="M9 5l24 22-11 1-9 10z" fill="#ed1c24" />
  </svg>
);

export default function App() {
  return (
    <div className="relative flex h-screen w-full flex-col overflow-hidden bg-[#efefef] font-['Noto_Sans',sans-serif]">
      <MenuBar />
      <MainToolbar />
      <SecondToolbar />
      <div className="flex min-h-0 flex-1">
        <PartsDock />
        <Schematic />
      </div>
      <Tooltip />
      <Arrow />
    </div>
  );
}
